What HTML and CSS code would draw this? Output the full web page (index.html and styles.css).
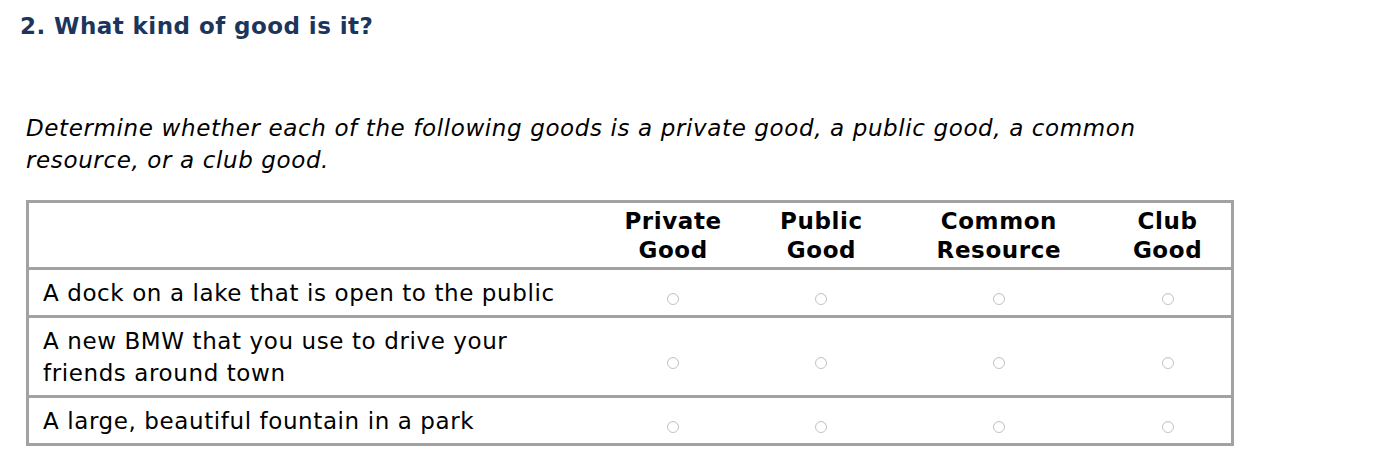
FILE: index.html
```html
<!DOCTYPE html>
<html>
<head>
<meta charset="utf-8">
<link rel="stylesheet" href="styles.css">
</head>
<body>
<div class="page">
  <h2 class="q-title">2. What kind of good is it?</h2>
  <p class="q-prompt">Determine whether each of the following goods is a private good, a public good, a common<br>resource, or a club good.</p>
  <table class="grid">
    <colgroup>
      <col class="c-label"><col class="c-a"><col class="c-b"><col class="c-c"><col class="c-d">
    </colgroup>
    <thead>
      <tr>
        <th></th>
        <th>Private<br>Good</th>
        <th>Public<br>Good</th>
        <th>Common<br>Resource</th>
        <th>Club<br>Good</th>
      </tr>
    </thead>
    <tbody>
      <tr>
        <td class="label">A dock on a lake that is open to the public</td>
        <td><span class="radio"></span></td>
        <td><span class="radio"></span></td>
        <td><span class="radio"></span></td>
        <td><span class="radio"></span></td>
      </tr>
      <tr>
        <td class="label">A new BMW that you use to drive your<br>friends around town</td>
        <td><span class="radio"></span></td>
        <td><span class="radio"></span></td>
        <td><span class="radio"></span></td>
        <td><span class="radio"></span></td>
      </tr>
      <tr>
        <td class="label">A large, beautiful fountain in a park</td>
        <td><span class="radio"></span></td>
        <td><span class="radio"></span></td>
        <td><span class="radio"></span></td>
        <td><span class="radio"></span></td>
      </tr>
    </tbody>
  </table>
</div>
</body>
</html>
```

FILE: styles.css
```css
html, body {
  margin: 0;
  padding: 0;
  background: #ffffff;
}

body {
  font-family: "DejaVu Sans", Verdana, sans-serif;
  color: #000;
}

.page {
  padding: 11px 0 0 20px;
}

.q-title {
  margin: 0;
  font-size: 23px;
  line-height: 30px;
  font-weight: bold;
  letter-spacing: 0.45px;
  color: #1b365d;
}

.q-prompt {
  margin: 71px 0 0 6px;
  width: 1300px;
  font-size: 23px;
  line-height: 32px;
  font-style: italic;
  letter-spacing: 0.62px;
}

.grid {
  margin: 24px 0 0 6px;
  border-collapse: collapse;
  border: 3px solid #a2a2a2;
  table-layout: fixed;
  width: 1208px;
}

.c-label { width: 568px; }
.c-a { width: 152px; }
.c-b { width: 144px; }
.c-c { width: 210px; }
.c-d { width: 128px; }

.grid th {
  font-size: 23px;
  line-height: 29px;
  font-weight: bold;
  letter-spacing: 0.6px;
  text-align: center;
  padding: 4px 0 2px;
  border-bottom: 3px solid #a2a2a2;
}

.grid td {
  font-size: 23px;
  line-height: 32px;
  letter-spacing: 0.6px;
  text-align: center;
  vertical-align: middle;
  padding: 7px 0 6px;
  border-bottom: 3px solid #a2a2a2;
}

.grid td.label {
  text-align: left;
  padding-left: 14px;
}

.radio {
  display: block;
  width: 10px;
  height: 10px;
  margin: 12px auto 0;
  border: 1px solid #c4c4c4;
  border-radius: 50%;
  background: radial-gradient(circle at 50% 60%, #ffffff 55%, #e8e8e8 100%);
}
```
